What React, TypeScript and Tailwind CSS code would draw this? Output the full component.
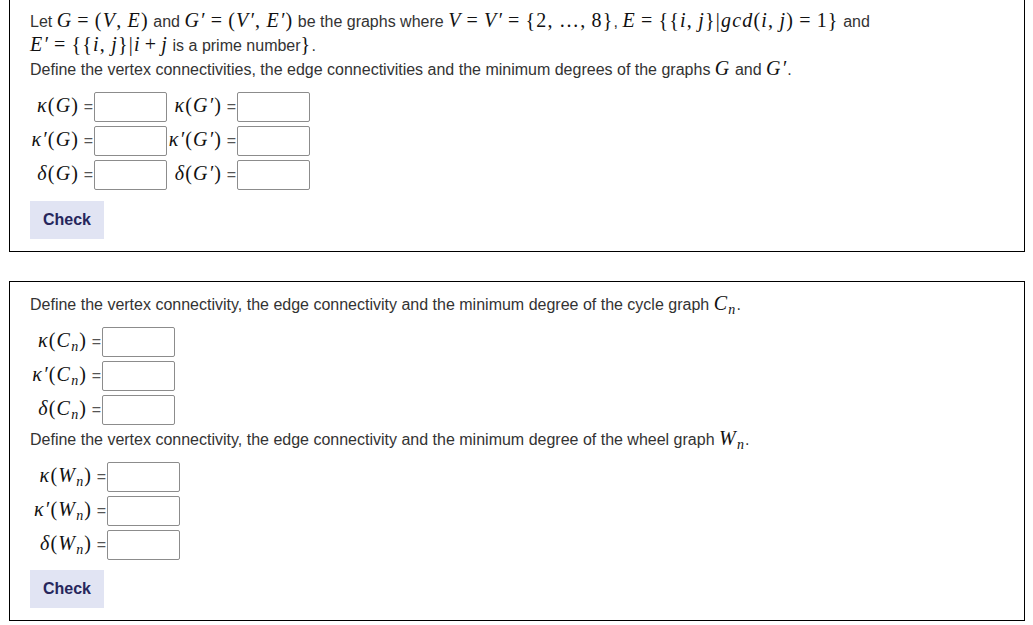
import React from "react";

const M = ({ children }: { children: React.ReactNode }) => (
  <span className="font-['Liberation_Serif',serif] text-[20px] leading-none tracking-[1.2px] text-[#111]">{children}</span>
);
const I = ({ children }: { children: React.ReactNode }) => <i>{children}</i>;
const Eq = () => <span className="mx-[5px]">=</span>;
const Plus = () => <span className="mx-[4px]">+</span>;
const C = () => <span>,{"\u2009"}</span>;
const Sub = ({ children }: { children: React.ReactNode }) => (
  <sub className="italic text-[14px]">{children}</sub>
);

const Input = ({ w = "w-[73px]" }: { w?: string }) => (
  <input
    type="text"
    className={`${w} h-[30px] shrink-0 rounded-[2px] border border-[#8c8c8c] bg-white outline-none`}
  />
);

const Label = ({ w, children }: { w: string; children: React.ReactNode }) => (
  <span className={`${w} shrink-0 whitespace-nowrap pr-[1px] text-right`}>
    <M>{children}</M>
    <span className="text-[#555]"> =</span>
  </span>
);

const CheckButton = () => (
  <button className="h-[38px] w-[74px] bg-[#e1e4f3] text-[16px] font-bold text-[#26265c]">Check</button>
);

export default function App() {
  return (
    <div className="min-h-[625px] bg-white pl-[9px] pr-[8px] font-['Liberation_Sans',Arial,sans-serif] text-[16px] text-[#333]">
      {/* Panel 1 */}
      <div className="mt-[-2px] border border-black pl-[20px] pr-[20px] pt-[11px] pb-[12px]">
        <p className="leading-[24px]">
          Let{" "}
          <M>
            <I>G</I>
            <Eq />(<I>V</I>
            <C />
            <I>E</I>)
          </M>{" "}
          and{" "}
          <M>
            <I>G′</I>
            <Eq />(<I>V′</I>
            <C />
            <I>E′</I>)
          </M>{" "}
          be the graphs where{" "}
          <M>
            <I>V</I>
            <Eq />
            <I>V′</I>
            <Eq />
            {"{"}2<C />…<C />8{"}"}
          </M>
          ,{" "}
          <M>
            <I>E</I>
            <Eq />
            {"{{"}
            <I>i</I>
            <C />
            <I>j</I>
            {"}|"}
            <I>gcd</I>(<I>i</I>
            <C />
            <I>j</I>)<Eq />1{"}"}
          </M>{" "}
          and
          <br />
          <M>
            <I>E′</I>
            <Eq />
            {"{{"}
            <I>i</I>
            <C />
            <I>j</I>
            {"}|"}
            <I>i</I>
            <Plus />
            <I>j</I>
          </M>{" "}
          is a prime number<M>{"}"}</M>.
          <br />
          Define the vertex connectivities, the edge connectivities and the minimum degrees of the graphs{" "}
          <M>
            <I>G</I>
          </M>{" "}
          and{" "}
          <M>
            <I>G′</I>
          </M>
          .
        </p>

        <div className="mt-[8px] flex flex-col">
          <div className="flex h-[34px] items-center">
            <Label w="w-[64px]">
              <I>κ</I>(<I>G</I>)
            </Label>
            <Input />
            <Label w="w-[70px]">
              <I>κ</I>(<I>G′</I>)
            </Label>
            <Input />
          </div>
          <div className="flex h-[34px] items-center">
            <Label w="w-[64px]">
              <I>κ′</I>(<I>G</I>)
            </Label>
            <Input />
            <Label w="w-[70px]">
              <I>κ′</I>(<I>G′</I>)
            </Label>
            <Input />
          </div>
          <div className="flex h-[34px] items-center">
            <Label w="w-[64px]">
              <I>δ</I>(<I>G</I>)
            </Label>
            <Input />
            <Label w="w-[70px]">
              <I>δ</I>(<I>G′</I>)
            </Label>
            <Input />
          </div>
        </div>

        <div className="mt-[9px]">
          <CheckButton />
        </div>
      </div>

      {/* Panel 2 */}
      <div className="mt-[29px] border border-black pl-[20px] pr-[20px] pt-[11px] pb-[12px]">
        <p className="leading-[24px]">
          Define the vertex connectivity, the edge connectivity and the minimum degree of the cycle graph{" "}
          <M>
            <I>C</I>
            <Sub>n</Sub>
          </M>
          .
        </p>
        <div className="mt-[8px] flex flex-col">
          <div className="flex h-[34px] items-center">
            <Label w="w-[72px]">
              <I>κ</I>(<I>C</I>
              <Sub>n</Sub>)
            </Label>
            <Input />
          </div>
          <div className="flex h-[34px] items-center">
            <Label w="w-[72px]">
              <I>κ′</I>(<I>C</I>
              <Sub>n</Sub>)
            </Label>
            <Input />
          </div>
          <div className="flex h-[34px] items-center">
            <Label w="w-[72px]">
              <I>δ</I>(<I>C</I>
              <Sub>n</Sub>)
            </Label>
            <Input />
          </div>
        </div>

        <p className="mt-[1px] leading-[24px]">
          Define the vertex connectivity, the edge connectivity and the minimum degree of the wheel graph{" "}
          <M>
            <I>W</I>
            <Sub>n</Sub>
          </M>
          .
        </p>
        <div className="mt-[8px] flex flex-col">
          <div className="flex h-[34px] items-center">
            <Label w="w-[77px]">
              <I>κ</I>(<I>W</I>
              <Sub>n</Sub>)
            </Label>
            <Input />
          </div>
          <div className="flex h-[34px] items-center">
            <Label w="w-[77px]">
              <I>κ′</I>(<I>W</I>
              <Sub>n</Sub>)
            </Label>
            <Input />
          </div>
          <div className="flex h-[34px] items-center">
            <Label w="w-[77px]">
              <I>δ</I>(<I>W</I>
              <Sub>n</Sub>)
            </Label>
            <Input />
          </div>
        </div>

        <div className="mt-[8px]">
          <CheckButton />
        </div>
      </div>
    </div>
  );
}
